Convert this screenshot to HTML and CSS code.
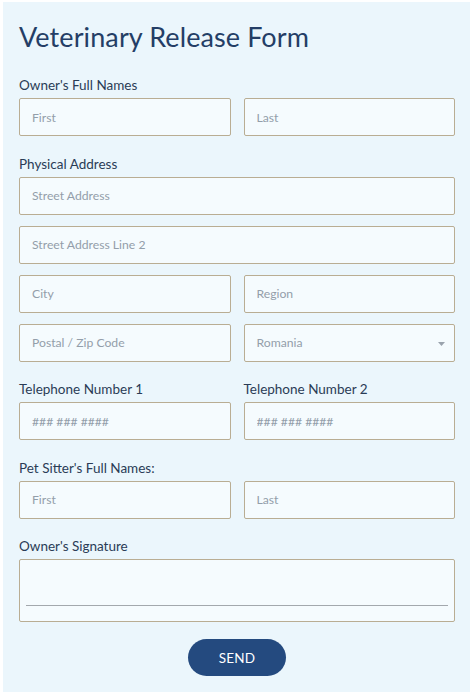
FILE: index.html
```html
<!DOCTYPE html>
<html lang="en">
<head>
<meta charset="utf-8">
<title>Veterinary Release Form</title>
<link rel="stylesheet" href="styles.css">
</head>
<body>
<form class="card">
  <h1 class="title">Veterinary Release Form</h1>

  <div class="group">
    <label class="label">Owner's Full Names</label>
    <div class="row two">
      <input class="field" type="text" placeholder="First">
      <input class="field" type="text" placeholder="Last">
    </div>
  </div>

  <div class="group">
    <label class="label">Physical Address</label>
    <div class="rows">
      <input class="field" type="text" placeholder="Street Address">
      <input class="field" type="text" placeholder="Street Address Line 2">
      <div class="row two">
        <input class="field" type="text" placeholder="City">
        <input class="field" type="text" placeholder="Region">
      </div>
      <div class="row two">
        <input class="field" type="text" placeholder="Postal / Zip Code">
        <div class="select-wrap">
          <div class="field select">Romania</div>
          <svg class="caret" width="7" height="4" viewBox="0 0 7 4"><path d="M0 0H7L3.5 4Z" fill="#9aa3ad"/></svg>
        </div>
      </div>
    </div>
  </div>

  <div class="group row two">
    <div class="col">
      <label class="label">Telephone Number 1</label>
      <input class="field" type="text" placeholder="### ### ####">
    </div>
    <div class="col">
      <label class="label">Telephone Number 2</label>
      <input class="field" type="text" placeholder="### ### ####">
    </div>
  </div>

  <div class="group">
    <label class="label">Pet Sitter's Full Names:</label>
    <div class="row two">
      <input class="field" type="text" placeholder="First">
      <input class="field" type="text" placeholder="Last">
    </div>
  </div>

  <div class="group">
    <label class="label">Owner's Signature</label>
    <div class="signature"><div class="sig-line"></div></div>
  </div>

  <div class="actions">
    <button class="send" type="button">SEND</button>
  </div>
</form>
</body>
</html>
```

FILE: styles.css
```css
html, body {
  margin: 0;
  padding: 0;
  background: #ffffff;
}

body {
  font-family: "Lato", "Open Sans", sans-serif;
}

.card {
  display: block;
  margin: 2px 4px 4px 3px;
  padding: 18px 15px 16px 16px;
  background: #ebf6fc;
}

.title {
  margin: 0 0 21px 0;
  font-size: 27px;
  line-height: 34px;
  font-weight: 400;
  color: #243e66;
  letter-spacing: 0.1px;
}

.group {
  margin-top: 17.5px;
}

.title + .group {
  margin-top: 0;
}

.label {
  display: block;
  font-size: 13.5px;
  line-height: 20px;
  color: #2a3c56;
  margin-bottom: 3px;
}

.rows {
  display: flex;
  flex-direction: column;
  gap: 11px;
}

.row.two {
  display: grid;
  grid-template-columns: 1fr 1fr;
  column-gap: 13px;
}

.col {
  display: flex;
  flex-direction: column;
}

.field {
  box-sizing: border-box;
  width: 100%;
  height: 38px;
  margin: 0;
  padding: 0 12px;
  border: 1px solid #b9ad93;
  border-radius: 2px;
  background: #f5fbfe;
  font-family: "Lato", "Open Sans", sans-serif;
  font-size: 12.2px;
  color: #2a3c56;
  outline: none;
}

.field::placeholder {
  color: #939eaa;
  opacity: 1;
}

.select-wrap {
  position: relative;
}

.select {
  display: flex;
  align-items: center;
  color: #939eaa;
}

.caret {
  position: absolute;
  right: 10px;
  top: 18px;
}

.signature {
  box-sizing: border-box;
  height: 63px;
  padding: 0 6px;
  border: 1px solid #b9ad93;
  border-radius: 2px;
  background: #f5fbfe;
}

.sig-line {
  height: 45px;
  border-bottom: 1px solid #a3a8ad;
}

.actions {
  display: flex;
  justify-content: center;
  margin-top: 17px;
}

.send {
  width: 98px;
  height: 37px;
  border: none;
  border-radius: 19px;
  background: #244a7f;
  color: #ffffff;
  font-family: "Lato", "Open Sans", sans-serif;
  font-size: 13.5px;
  letter-spacing: 0.2px;
  cursor: pointer;
}
```
